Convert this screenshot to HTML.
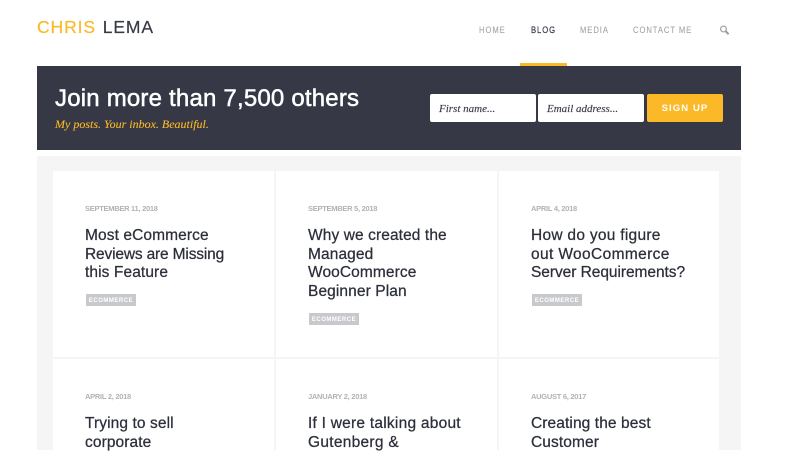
<!DOCTYPE html>
<html>
<head>
<meta charset="utf-8">
<style>
html,body{margin:0;padding:0;background:#fff;width:800px;height:450px;overflow:hidden;font-family:"Liberation Sans",sans-serif}
.a{position:absolute;white-space:nowrap}
.n{font-size:9px;letter-spacing:1.1px;color:#a3a5ab;top:25px;line-height:10px;transform:scaleX(.85);transform-origin:0 50%;-webkit-text-stroke:.1px #a3a5ab}
.card{position:absolute;background:#fff}
.d{position:absolute;white-space:nowrap;font-size:7.5px;font-weight:bold;letter-spacing:-.27px;color:#b0b2b6;line-height:10px;margin-top:1px}
.t{position:absolute;white-space:nowrap;font-size:15.5px;color:#2c2f3a;line-height:19px;letter-spacing:.1px;-webkit-text-stroke:.25px #2c2f3a}
.tag{position:absolute;background:#c8c9cc;color:#fff;font-size:6px;font-weight:bold;letter-spacing:.5px;line-height:14px;height:12px;width:50px;text-align:center;overflow:hidden}
.inp{position:absolute;top:94px;height:28px;background:#fff;border-radius:2px;font:italic 11px/30px "Liberation Serif",serif;color:#3a3d48;box-sizing:border-box;padding-left:9px;-webkit-text-stroke:.15px #3a3d48}
</style>
</head>
<body>
<div class="a" style="left:37px;top:17px;font-size:17.5px;line-height:20px;letter-spacing:.9px;word-spacing:1px;color:#fbb927;-webkit-text-stroke:.2px #fbb927">CHRIS <span style="color:#363945;-webkit-text-stroke:.2px #363945">LEMA</span></div>
<div class="a n" style="left:479px">HOME</div>
<div class="a n" style="left:531px;color:#363945;-webkit-text-stroke:.2px #363945">BLOG</div>
<div class="a n" style="left:580px">MEDIA</div>
<div class="a n" style="left:633px">CONTACT ME</div>
<svg class="a" style="left:719px;top:25px" width="11" height="10" viewBox="0 0 11 10"><circle cx="4.5" cy="4" r="2.9" fill="none" stroke="#a3a5ab" stroke-width="1.3"/><path d="M6.6 6.2L9.6 9.2" stroke="#8f98a5" stroke-width="1.9"/></svg>
<div class="a" style="left:520px;top:63px;width:47px;height:3px;background:#fbb927"></div>
<div class="a" style="left:37px;top:66px;width:704px;height:84px;background:#363945"></div>
<div class="a" style="left:55px;top:85px;font-size:24px;line-height:28px;color:#fff;letter-spacing:.2px;-webkit-text-stroke:.5px #fff">Join more than 7,500 others</div>
<div class="a" style="left:55px;top:116px;font:italic 12px/16px 'Liberation Serif',serif;color:#fbb927;-webkit-text-stroke:.1px #fbb927">My posts. Your inbox. Beautiful.</div>
<div class="inp" style="left:430px;width:106px">First name...</div>
<div class="inp" style="left:538px;width:106px">Email address...</div>
<div class="a" style="left:647px;top:94px;width:76px;height:28px;background:#fbb927;border-radius:2px;color:#fff;font-size:9.5px;font-weight:bold;letter-spacing:1.1px;line-height:30px;text-align:center">SIGN UP</div>
<div class="a" style="left:37px;top:156px;width:704px;height:294px;background:#f5f5f5"></div>

<div class="card" style="left:53px;top:171px;width:221px;height:186px"></div>
<div class="card" style="left:276px;top:171px;width:221px;height:186px"></div>
<div class="card" style="left:499px;top:171px;width:220px;height:186px"></div>
<div class="card" style="left:53px;top:359px;width:221px;height:91px"></div>
<div class="card" style="left:276px;top:359px;width:221px;height:91px"></div>
<div class="card" style="left:499px;top:359px;width:220px;height:91px"></div>

<div class="d" style="left:85px;top:203px">SEPTEMBER 11, 2018</div>
<div class="t" style="left:85px;top:226px">Most eCommerce</div>
<div class="t" style="left:85px;top:245px;letter-spacing:-.16px">Reviews are Missing</div>
<div class="t" style="left:85px;top:263px">this Feature</div>
<div class="tag" style="left:86px;top:294px">ECOMMERCE</div>

<div class="d" style="left:308px;top:203px">SEPTEMBER 5, 2018</div>
<div class="t" style="left:308px;top:226px">Why we created the</div>
<div class="t" style="left:308px;top:245px">Managed</div>
<div class="t" style="left:308px;top:263px">WooCommerce</div>
<div class="t" style="left:308px;top:282px">Beginner Plan</div>
<div class="tag" style="left:309px;top:313px">ECOMMERCE</div>

<div class="d" style="left:531px;top:203px">APRIL 4, 2018</div>
<div class="t" style="left:531px;top:226px;letter-spacing:.28px">How do you figure</div>
<div class="t" style="left:531px;top:245px;letter-spacing:.37px">out WooCommerce</div>
<div class="t" style="left:531px;top:263px;letter-spacing:-.05px">Server Requirements?</div>
<div class="tag" style="left:532px;top:294px">ECOMMERCE</div>

<div class="d" style="left:85px;top:391px">APRIL 2, 2018</div>
<div class="t" style="left:85px;top:414px">Trying to sell</div>
<div class="t" style="left:85px;top:433px">corporate</div>

<div class="d" style="left:308px;top:391px">JANUARY 2, 2018</div>
<div class="t" style="left:308px;top:414px;letter-spacing:.24px">If I were talking about</div>
<div class="t" style="left:308px;top:433px;letter-spacing:.28px">Gutenberg &amp;</div>

<div class="d" style="left:531px;top:391px">AUGUST 6, 2017</div>
<div class="t" style="left:531px;top:414px">Creating the best</div>
<div class="t" style="left:531px;top:433px">Customer</div>
</body>
</html>
